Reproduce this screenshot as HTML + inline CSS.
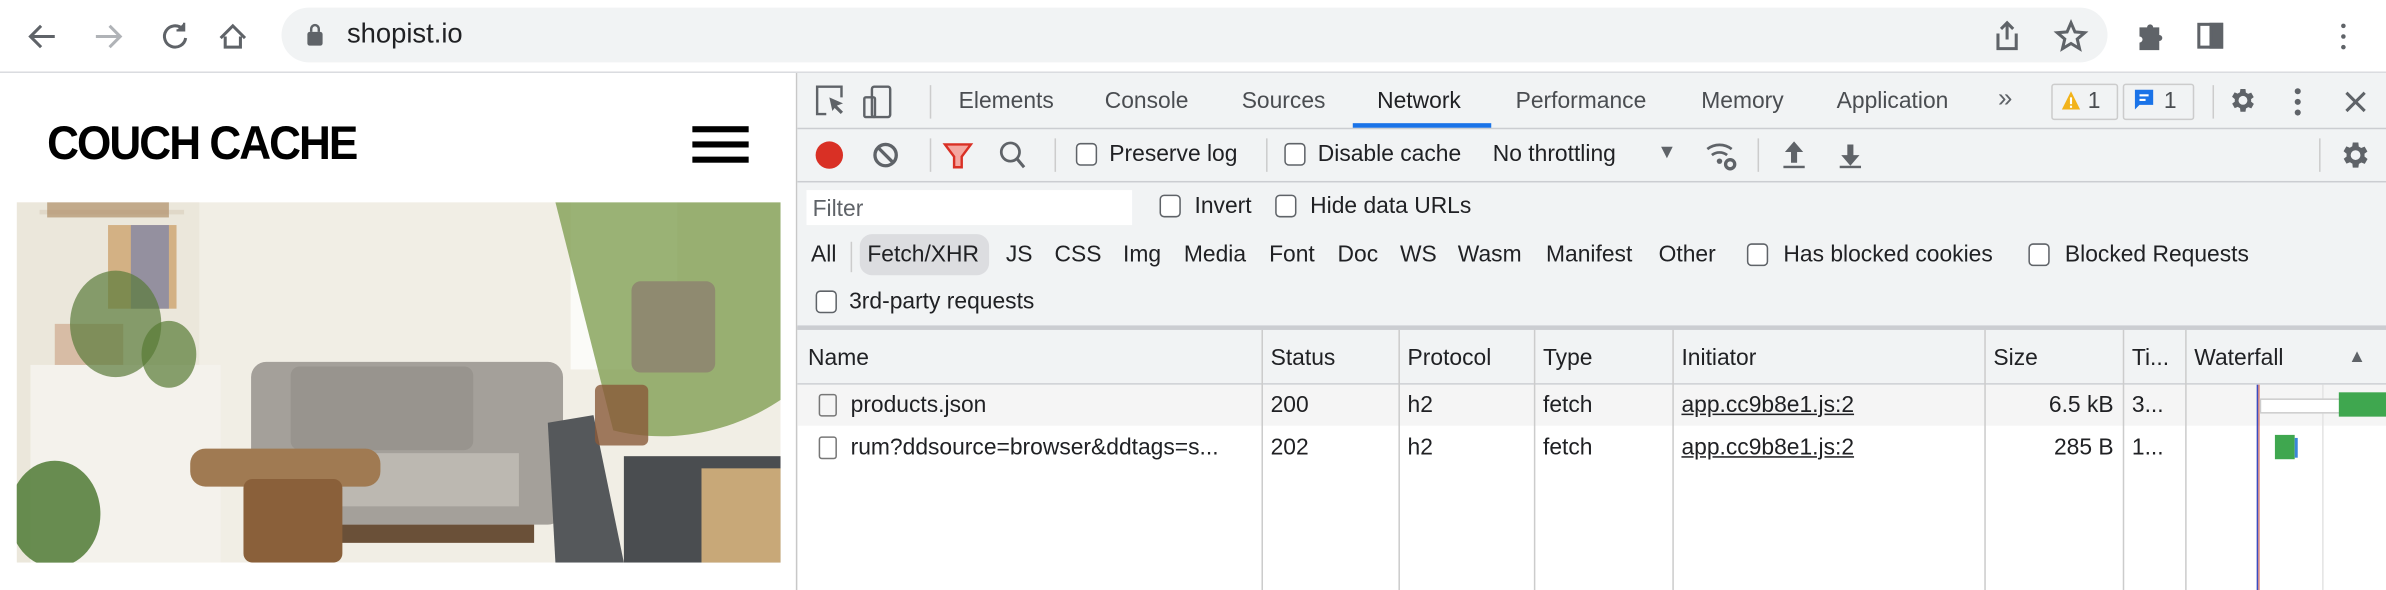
<!DOCTYPE html>
<html><head><meta charset="utf-8"><style>
html,body{margin:0;padding:0;width:2386px;height:590px;overflow:hidden;background:#fff}
#w{position:absolute;left:0;top:0;width:1568px;height:388px;transform:scale(1.52168,1.5206);transform-origin:0 0;font-family:"Liberation Sans",sans-serif;color:#202124}
.a{position:absolute}
.t{position:absolute;font-size:15px;white-space:nowrap}
.cb{position:absolute;width:12px;height:13px;border:1.3px solid #5f6368;border-radius:3px;background:#fff}
.vl{position:absolute;width:1px;background:#ccc}
</style></head><body><div id="w">
<div class="a" style="left:0;top:0;width:1568px;height:47px;background:#fff;border-bottom:1px solid #dadce0"></div>
<svg class="a" style="left:16px;top:12px" width="150" height="24" viewBox="0 0 150 24" fill="none" stroke="#5f6368" stroke-width="2">
<path d="M20 12H5M11 5l-7 7 7 7"/>
<path d="M47 12h15M56 5l7 7-7 7" stroke="#b0b3b7"/>
<path d="M104 7a7 7 0 1 0 2 6" /><path d="M105 3v5h-5" fill="#5f6368" stroke-width="1.5"/>
<path d="M132 12v7h10v-7M129 13l8-8 8 8"/>
</svg>
<div class="a" style="left:185px;top:5px;width:1200px;height:36px;background:#f1f3f4;border-radius:18px"></div>
<svg class="a" style="left:200px;top:15px" width="14" height="16"><rect x="2" y="6" width="10" height="9" rx="1.5" fill="#5f6368"/><path d="M4.5 6V4a2.5 2.5 0 0 1 5 0v2" stroke="#5f6368" stroke-width="1.6" fill="none"/></svg>
<div class="t" style="left:228px;top:12px;font-size:18px">shopist.io</div>
<svg class="a" style="left:1308px;top:12px" width="250" height="24" fill="none" stroke="#5f6368" stroke-width="2">
<path d="M5 10v10h12V10M11 3v11M7 7l4-4 4 4"/>
<path d="M53 3l2.6 6 6.4.5-4.9 4.2 1.5 6.3-5.6-3.4-5.6 3.4 1.5-6.3-4.9-4.2 6.4-.5z"/>
<path d="M98 6h5a2 2 0 0 1 4 0h4v5a2 2 0 0 1 0 4v6h-13v-5a2 2 0 0 0 0-4z" fill="#5f6368" stroke="none"/>
<rect x="137" y="4" width="15" height="15"/><rect x="145" y="4" width="7" height="15" fill="#5f6368"/>
<circle cx="232" cy="5" r="1.5" fill="#5f6368" stroke="none"/><circle cx="232" cy="12" r="1.5" fill="#5f6368" stroke="none"/><circle cx="232" cy="19" r="1.5" fill="#5f6368" stroke="none"/>
</svg>
<div class="t" style="left:31px;top:79px;font-size:29px;font-weight:bold;letter-spacing:-1.3px;color:#000;transform:scaleY(1.08);transform-origin:0 50%">COUCH CACHE</div>
<div class="a" style="left:455px;top:83px;width:37px;height:4px;background:#000"></div>
<div class="a" style="left:455px;top:93px;width:37px;height:4px;background:#000"></div>
<div class="a" style="left:455px;top:103px;width:37px;height:4px;background:#000"></div>
<svg class="a" style="left:11px;top:133px" width="502" height="237" viewBox="0 0 502 237">
<rect width="502" height="237" fill="#f1eee5"/>
<rect x="0" y="0" width="120" height="237" fill="#ebe7db"/>
<rect x="15" y="5" width="95" height="3" fill="#e0d8c8"/>
<rect x="20" y="0" width="80" height="10" fill="#b0906a" opacity=".7"/>
<rect x="60" y="15" width="45" height="55" fill="#c99a60" opacity=".7"/><rect x="75" y="15" width="25" height="55" fill="#6a7ab0" opacity=".6"/>
<rect x="25" y="80" width="45" height="55" fill="#c9a080" opacity=".6"/>
<rect x="9" y="107" width="125" height="130" fill="#f4f2ec"/>
<rect x="364" y="0" width="70" height="110" fill="#fbfbf8"/>
<rect x="154" y="105" width="205" height="107" rx="10" fill="#a4a09a"/>
<rect x="180" y="108" width="120" height="55" rx="6" fill="#98948e"/>
<rect x="200" y="165" width="130" height="35" fill="#bcb8b1"/>
<rect x="170" y="212" width="170" height="12" fill="#6a5038"/>
<rect x="114" y="162" width="125" height="25" rx="10" fill="#a07a52"/>
<rect x="149" y="182" width="65" height="55" rx="6" fill="#8a603a"/>
<path d="M354 0h148v130c-30 20-70 30-110 20z" fill="#7a9a4a" opacity=".75"/>
<rect x="404" y="52" width="55" height="60" rx="6" fill="#8f8a70"/>
<path d="M349 145l30-5 20 97h-45z" fill="#55585b"/>
<rect x="399" y="167" width="103" height="70" fill="#4a4d50"/>
<rect x="450" y="175" width="52" height="62" fill="#c8a878"/>
<rect x="380" y="120" width="35" height="40" rx="4" fill="#8a5a3a" opacity=".8"/>
<ellipse cx="65" cy="80" rx="30" ry="35" fill="#5a7a3a" opacity=".7"/>
<ellipse cx="25" cy="205" rx="30" ry="35" fill="#4f7a35" opacity=".85"/>
<ellipse cx="100" cy="100" rx="18" ry="22" fill="#577a35" opacity=".7"/>
</svg>
<div class="a" style="left:523px;top:48px;width:1045px;height:340px;background:#fff;border-left:1px solid #c8c8c8"></div>
<div class="a" style="left:524px;top:48px;width:1044px;height:167px;background:#f1f3f4"></div>
<div class="a" style="left:524px;top:84px;width:1044px;height:1px;background:#cbcdd1"></div>
<div class="a" style="left:524px;top:119px;width:1044px;height:1px;background:#cbcdd1"></div>
<div class="a" style="left:524px;top:214px;width:1044px;height:3px;background:#cbcdd1"></div>
<svg class="a" style="left:533px;top:54px" width="62" height="26" fill="none" stroke="#5f6368" stroke-width="1.6">
<path d="M10 21H4V3h16v7"/><path d="M12 10l9 4-4 1.5 4 4-1.5 1.5-4-4L14 19z" fill="#5f6368" stroke="none"/>
<rect x="40" y="3" width="12" height="20" rx="1.5"/><rect x="35" y="10" width="7" height="13" rx="1"/>
</svg>
<div class="a" style="left:611px;top:56px;width:1px;height:22px;background:#ccc"></div>
<div class="t" style="left:630px;top:58px;color:#4a4d51">Elements</div>
<div class="t" style="left:726px;top:58px;color:#4a4d51">Console</div>
<div class="t" style="left:816px;top:58px;color:#4a4d51">Sources</div>
<div class="t" style="left:905px;top:58px;color:#202124">Network</div>
<div class="a" style="left:889px;top:81px;width:91px;height:3px;background:#1a73e8"></div>
<div class="t" style="left:996px;top:58px;color:#4a4d51">Performance</div>
<div class="t" style="left:1118px;top:58px;color:#4a4d51">Memory</div>
<div class="t" style="left:1207px;top:58px;color:#4a4d51">Application</div>
<div class="t" style="left:1313px;top:55px;color:#5f6368;font-size:17px">»</div>
<div class="a" style="left:1348px;top:55px;width:42px;height:22px;border:1px solid #ccc;border-radius:2px"></div>
<svg class="a" style="left:1354px;top:59px" width="14" height="14"><path d="M7 1L13 13H1z" fill="#f2b31b"/><rect x="6.3" y="5" width="1.4" height="4.5" fill="#fff"/><rect x="6.3" y="10.5" width="1.4" height="1.4" fill="#fff"/></svg>
<div class="t" style="left:1372px;top:58px;color:#4a4d51">1</div>
<div class="a" style="left:1395px;top:55px;width:45px;height:22px;border:1px solid #ccc;border-radius:2px"></div>
<svg class="a" style="left:1402px;top:58px" width="14" height="16"><path d="M1 1h12v10H4l-3 3z" fill="#1a73e8"/><rect x="4" y="4" width="6" height="1.4" fill="#fff"/><rect x="4" y="7" width="4" height="1.4" fill="#fff"/></svg>
<div class="t" style="left:1422px;top:58px;color:#4a4d51">1</div>
<div class="a" style="left:1454px;top:56px;width:1px;height:22px;background:#ccc"></div>
<svg class="a" style="left:1464px;top:56px" width="20" height="20" viewBox="0 0 24 24"><path fill="#5f6368" d="M19.4 13a7.5 7.5 0 0 0 0-2l2.1-1.6-2-3.5-2.5 1a7 7 0 0 0-1.7-1L15 3h-4l-.4 2.7a7 7 0 0 0-1.7 1l-2.5-1-2 3.5L6.6 11a7.5 7.5 0 0 0 0 2l-2.1 1.6 2 3.5 2.5-1a7 7 0 0 0 1.7 1L11 21h4l.4-2.7a7 7 0 0 0 1.7-1l2.5 1 2-3.5zM13 15.5a3.5 3.5 0 1 1 0-7 3.5 3.5 0 0 1 0 7z" transform="translate(-1 0)"/></svg>
<svg class="a" style="left:1505px;top:56px" width="10" height="22"><circle cx="5" cy="4" r="2" fill="#5f6368"/><circle cx="5" cy="11" r="2" fill="#5f6368"/><circle cx="5" cy="18" r="2" fill="#5f6368"/></svg>
<svg class="a" style="left:1540px;top:59px" width="16" height="16"><path d="M2 2l12 12M14 2L2 14" stroke="#5f6368" stroke-width="2"/></svg>
<svg class="a" style="left:533px;top:90px" width="160" height="24">
<circle cx="12" cy="12" r="9" fill="#d93025"/>
<circle cx="49" cy="12" r="7" fill="none" stroke="#5f6368" stroke-width="2.2"/><path d="M44 7l10 10" stroke="#5f6368" stroke-width="2.2"/>
<path d="M88 5h17l-6 8v7h-5v-7z" fill="#f4a7a0" stroke="#d93025" stroke-width="1.6"/>
<circle cx="131" cy="10" r="6" fill="none" stroke="#5f6368" stroke-width="1.8"/><path d="M135 14l5 6" stroke="#5f6368" stroke-width="2"/>
</svg>
<div class="a" style="left:611px;top:91px;width:1px;height:22px;background:#ccc"></div>
<div class="a" style="left:693px;top:91px;width:1px;height:22px;background:#ccc"></div>
<div class="cb" style="left:707px;top:94px"></div>
<div class="t" style="left:729px;top:93px">Preserve log</div>
<div class="a" style="left:832px;top:91px;width:1px;height:22px;background:#ccc"></div>
<div class="cb" style="left:844px;top:94px"></div>
<div class="t" style="left:866px;top:93px">Disable cache</div>
<div class="t" style="left:981px;top:93px">No throttling</div>
<div class="t" style="left:1089px;top:92px;font-size:13px;color:#5f6368">▼</div>
<svg class="a" style="left:1119px;top:90px" width="26" height="24" fill="none" stroke="#5f6368" stroke-width="1.8"><path d="M3 8a13 13 0 0 1 16 0M6 12a8 8 0 0 1 10 0"/><circle cx="11" cy="16" r="1.8" fill="#5f6368" stroke="none"/><circle cx="18" cy="18" r="3" stroke-width="2.2"/></svg>
<div class="a" style="left:1155px;top:91px;width:1px;height:22px;background:#ccc"></div>
<svg class="a" style="left:1168px;top:90px" width="60" height="24" fill="#5f6368"><path d="M11 3l6 7h-4v7H9v-7H5z"/><rect x="4" y="19" width="14" height="1.6"/><path d="M48 21l6-7h-4V7h-4v7h-4z" transform="translate(0 -2)"/><rect x="41" y="19" width="14" height="1.6"/></svg>
<div class="a" style="left:1524px;top:91px;width:1px;height:22px;background:#ccc"></div>
<svg class="a" style="left:1537px;top:91px" width="22" height="22" viewBox="0 0 24 24"><path fill="#5f6368" d="M19.4 13a7.5 7.5 0 0 0 0-2l2.1-1.6-2-3.5-2.5 1a7 7 0 0 0-1.7-1L15 3h-4l-.4 2.7a7 7 0 0 0-1.7 1l-2.5-1-2 3.5L6.6 11a7.5 7.5 0 0 0 0 2l-2.1 1.6 2 3.5 2.5-1a7 7 0 0 0 1.7 1L11 21h4l.4-2.7a7 7 0 0 0 1.7-1l2.5 1 2-3.5zM13 15.5a3.5 3.5 0 1 1 0-7 3.5 3.5 0 0 1 0 7z" transform="translate(-1 0)"/></svg>
<div class="a" style="left:530px;top:125px;width:214px;height:23px;background:#fff"></div>
<div class="t" style="left:534px;top:129px;color:#5f6368">Filter</div>
<div class="cb" style="left:762px;top:128px"></div>
<div class="t" style="left:785px;top:127px">Invert</div>
<div class="cb" style="left:838px;top:128px"></div>
<div class="t" style="left:861px;top:127px">Hide data URLs</div>
<div class="t" style="left:533px;top:159px">All</div>
<div class="a" style="left:559px;top:159px;width:1px;height:20px;background:#ccc"></div>
<div class="a" style="left:565px;top:154px;width:85px;height:27px;background:#dcdde0;border-radius:8px"></div>
<div class="t" style="left:570px;top:159px">Fetch/XHR</div>
<div class="t" style="left:661px;top:159px">JS</div>
<div class="t" style="left:693px;top:159px">CSS</div>
<div class="t" style="left:738px;top:159px">Img</div>
<div class="t" style="left:778px;top:159px">Media</div>
<div class="t" style="left:834px;top:159px">Font</div>
<div class="t" style="left:879px;top:159px">Doc</div>
<div class="t" style="left:920px;top:159px">WS</div>
<div class="t" style="left:958px;top:159px">Wasm</div>
<div class="t" style="left:1016px;top:159px">Manifest</div>
<div class="t" style="left:1090px;top:159px">Other</div>
<div class="cb" style="left:1148px;top:160px"></div>
<div class="t" style="left:1172px;top:159px">Has blocked cookies</div>
<div class="cb" style="left:1333px;top:160px"></div>
<div class="t" style="left:1357px;top:159px">Blocked Requests</div>
<div class="cb" style="left:536px;top:191px"></div>
<div class="t" style="left:558px;top:190px">3rd-party requests</div>
<div class="a" style="left:524px;top:217px;width:1044px;height:35px;background:#f1f3f4;border-bottom:1px solid #cbcdd1"></div>
<div class="a" style="left:524px;top:253px;width:1044px;height:27px;background:#f5f5f5"></div>
<div class="vl" style="left:829px;top:217px;height:171px"></div>
<div class="vl" style="left:919px;top:217px;height:171px"></div>
<div class="vl" style="left:1008px;top:217px;height:171px"></div>
<div class="vl" style="left:1099px;top:217px;height:171px"></div>
<div class="vl" style="left:1304px;top:217px;height:171px"></div>
<div class="vl" style="left:1395px;top:217px;height:171px"></div>
<div class="vl" style="left:1436px;top:217px;height:171px"></div>
<div class="vl" style="left:1526px;top:253px;height:135px;background:#e4e4e4"></div>
<div class="t" style="left:531px;top:227px">Name</div>
<div class="t" style="left:835px;top:227px">Status</div>
<div class="t" style="left:925px;top:227px">Protocol</div>
<div class="t" style="left:1014px;top:227px">Type</div>
<div class="t" style="left:1105px;top:227px">Initiator</div>
<div class="t" style="left:1310px;top:227px">Size</div>
<div class="t" style="left:1401px;top:227px">Ti...</div>
<div class="t" style="left:1442px;top:227px">Waterfall</div>
<div class="t" style="left:1543px;top:227px;font-size:12px;color:#5f6368">▲</div>
<div class="a" style="left:538px;top:259px;width:10px;height:13px;border:1px solid #777;border-radius:2px"></div>
<div class="t" style="left:559px;top:258px">products.json</div>
<div class="t" style="left:835px;top:258px">200</div>
<div class="t" style="left:925px;top:258px">h2</div>
<div class="t" style="left:1014px;top:258px">fetch</div>
<div class="t" style="left:1105px;top:258px;text-decoration:underline">app.cc9b8e1.js:2</div>
<div class="t" style="left:1310px;top:258px;width:79px;text-align:right">6.5 kB</div>
<div class="t" style="left:1401px;top:258px">3...</div>
<div class="a" style="left:538px;top:287px;width:10px;height:13px;border:1px solid #777;border-radius:2px"></div>
<div class="t" style="left:559px;top:286px">rum?ddsource=browser&amp;ddtags=s...</div>
<div class="t" style="left:835px;top:286px">202</div>
<div class="t" style="left:925px;top:286px">h2</div>
<div class="t" style="left:1014px;top:286px">fetch</div>
<div class="t" style="left:1105px;top:286px;text-decoration:underline">app.cc9b8e1.js:2</div>
<div class="t" style="left:1310px;top:286px;width:79px;text-align:right">285 B</div>
<div class="t" style="left:1401px;top:286px">1...</div>
<div class="a" style="left:1483px;top:253px;width:1px;height:135px;background:#3b4cc0"></div>
<div class="a" style="left:1484px;top:253px;width:1px;height:135px;background:#c0392b;opacity:.6"></div>
<div class="a" style="left:1485px;top:262px;width:52px;height:8px;border:1px solid #ccc;background:#fff"></div>
<div class="a" style="left:1537px;top:258px;width:31px;height:16px;background:#3fa74f"></div>
<div class="a" style="left:1495px;top:286px;width:13px;height:16px;background:#3fa74f"></div>
<div class="a" style="left:1508px;top:288px;width:2px;height:13px;background:#3a86d8"></div>
</div></body></html>
